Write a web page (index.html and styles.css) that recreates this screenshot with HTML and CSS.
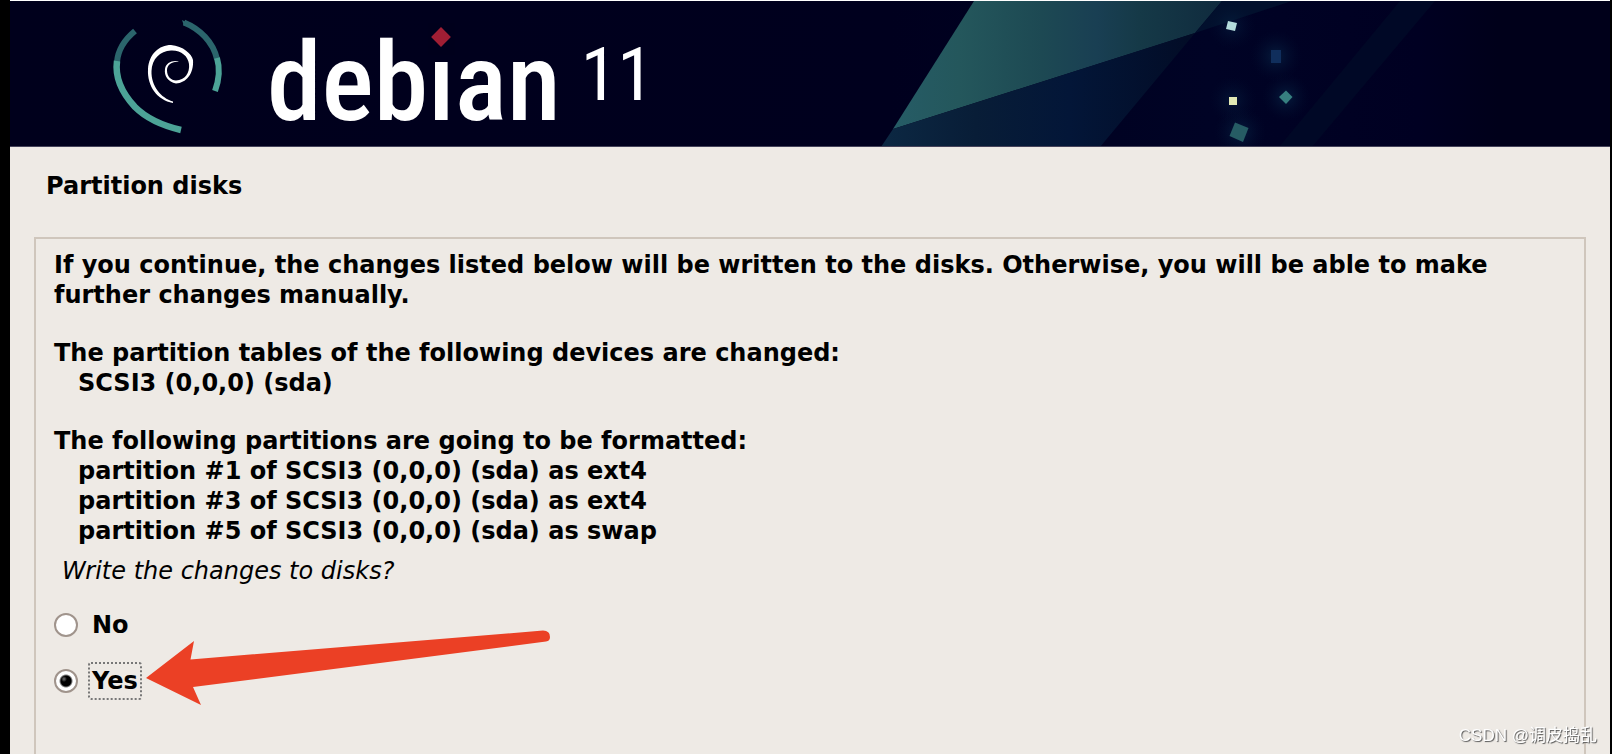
FILE: index.html
```html
<!DOCTYPE html>
<html lang="en">
<head>
  <meta charset="UTF-8">
  <meta name="viewport" content="width=device-width, initial-scale=1">
  <title>Partition disks</title>
  <link rel="stylesheet" href="styles.css">
</head>
<body>
  <div class="installer">
    <header class="banner">
      <svg class="banner-art" viewBox="10 1 1600 145" preserveAspectRatio="xMinYMin slice" aria-hidden="true">
        <defs>
          <linearGradient id="sky" x1="0" x2="1" y1="0" y2="0">
            <stop offset="0" stop-color="#00001c"/>
            <stop offset="0.55" stop-color="#00001e"/>
            <stop offset="0.75" stop-color="#000325"/>
            <stop offset="0.88" stop-color="#000022"/>
            <stop offset="0.93" stop-color="#00001a"/>
          </linearGradient>
          <linearGradient id="beam" gradientUnits="userSpaceOnUse" x1="893" x2="1222" y1="0" y2="0">
            <stop offset="0" stop-color="#265c66"/>
            <stop offset="0.2" stop-color="#24575c"/>
            <stop offset="0.45" stop-color="#1d4953"/>
            <stop offset="0.62" stop-color="#193f53"/>
            <stop offset="0.75" stop-color="#153947"/>
            <stop offset="1" stop-color="#102b3e"/>
          </linearGradient>
          <linearGradient id="shade" gradientUnits="userSpaceOnUse" x1="881" x2="1195" y1="0" y2="0">
            <stop offset="0" stop-color="#0c2843"/>
            <stop offset="0.3" stop-color="#081d37"/>
            <stop offset="0.6" stop-color="#031638"/>
            <stop offset="1" stop-color="#020c26"/>
          </linearGradient>
          <radialGradient id="glow">
            <stop offset="0" stop-color="#0a3050" stop-opacity="0.8"/>
            <stop offset="1" stop-color="#021030" stop-opacity="0"/>
          </radialGradient>
        </defs>
        <rect x="10" y="1" width="1600" height="146" fill="url(#sky)"/>
        <polygon points="974,1 1222,1 1195,33 893,129" fill="url(#beam)"/>
        <polygon points="893,129 881,147 1100,147 1195,33" fill="url(#shade)"/>
        <polygon points="1222,1 1292,1 1195,33" fill="#02102d"/>
        <polygon points="1400,1 1435,1 1312,147 1279,147" fill="#000826"/>
        <!-- sparks -->
        <circle cx="1232" cy="26" r="24" fill="url(#glow)" opacity="0.5"/>
        <circle cx="1276" cy="56" r="26" fill="url(#glow)" opacity="0.7"/>
        <circle cx="1286" cy="97" r="24" fill="url(#glow)" opacity="0.7"/>
        <circle cx="1233" cy="100" r="24" fill="url(#glow)" opacity="0.5"/>
        <circle cx="1240" cy="132" r="26" fill="url(#glow)" opacity="0.7"/>
        <polygon points="1228,21 1237,23 1235,31 1226,29" fill="#b4dcdc"/>
        <rect x="1271" y="50" width="10" height="13" fill="#102e5c"/>
        <polygon points="1286,90.500 1292.500,97 1286,104 1279,97" fill="#378080"/>
        <rect x="1229" y="97" width="8" height="8" fill="#e2e8b4"/>
        <polygon points="1235,122.500 1248.500,128 1243,142 1229.500,136" fill="#265c64"/>
        <!-- swirl -->
        <g fill="none">
          <path d="M135 31 C124 40 118 50 117 62" stroke="#2b656c" stroke-width="6"/>
          <path d="M117 61 C115 76 121 92 135 107 C146 118 164 126 181 130" stroke="#4ca397" stroke-width="6.500"/>
          <path d="M184 22.500 C200 29 213 42 217 59" stroke="#2b656c" stroke-width="6"/>
          <path d="M217 58 C220 68 219 80 215 91" stroke="#4ca397" stroke-width="6"/>
        </g>
        <path d="M182 20 L190 24 L184 26 Z" fill="#2b656c"/>
        <path d="M173 103 C157 100 147 86 148 69 C149 54 159 45 171 45 C183 46 192 54 193 60 C194 74 186 83 176 83.500 C168 82 164 76 165 69 C166 63 172 60 179 61.500 C171 62 167 65 167 70 C167 77 171 80 176 80.500 C185 80 190 73 189 64 C188 56 181 50 171 50.500 C160 51 152 59 151.500 71 C151 86 161 98 173 101.500 Z" fill="#fff"/>
      </svg>
      <div class="brand"><span class="brand-name">deb<span class="brand-i">i</span>an</span><span class="brand-version">11</span></div>
    </header>

    <main class="content">
      <h1 class="title">Partition disks</h1>

      <form class="frame">
        <p>If you continue, the changes listed below will be written to the disks. Otherwise, you will be able to make further changes manually.</p>
        <p>The partition tables of the following devices are changed:<br>
          <span class="device">SCSI3 (0,0,0) (sda)</span></p>
        <p>The following partitions are going to be formatted:<br>
          <span class="device">partition #1 of SCSI3 (0,0,0) (sda) as ext4</span>
          <span class="device">partition #3 of SCSI3 (0,0,0) (sda) as ext4</span>
          <span class="device">partition #5 of SCSI3 (0,0,0) (sda) as swap</span></p>

        <fieldset class="question">
          <legend>Write the changes to disks?</legend>
          <div class="option">
            <input type="radio" name="write" id="write-no" value="no">
            <label for="write-no">No</label>
          </div>
          <div class="option">
            <input type="radio" name="write" id="write-yes" value="yes" checked>
            <label for="write-yes">Yes</label>
            <svg class="arrow" viewBox="146 630 405 76" aria-hidden="true">
              <path d="M146 678 L194 641 L190.500 659.500 L543 630.500 Q550 630.500 550 637 Q550 641 546 641.500 L193 687 L201 705 Z" fill="#eb4025"/>
            </svg>
          </div>
        </fieldset>
      </form>
    </main>
  </div>
  <div class="watermark">CSDN @调皮捣乱</div>
</body>
</html>
```
FILE: styles.css
```css
* {
  box-sizing: border-box;
}
body {
  margin: 0;
  background: #000;
  color: #000;
  font-family: "DejaVu Sans", Verdana, sans-serif;
  font-size: 24px;
  font-weight: bold;
  line-height: 30px;
}
.installer {
  display: flex;
  flex-direction: column;
  min-height: 100vh;
  margin: 0 2px 0 10px;
  background: #eeeae5;
}

/* banner */
.banner {
  position: relative;
  height: 147px;
  border-top: 1px solid #fff;
  border-bottom: 1px solid #45435a;
  background: #00001c;
}
.banner-art {
  position: absolute;
  top: 0;
  left: 0;
  width: 100%;
  height: 100%;
}
.brand {
  position: relative;
  display: flex;
  align-items: flex-start;
  gap: 20px;
  padding: 22px 0 0 257px;
  color: #fff;
  font-family: "Liberation Sans Narrow", "Roboto Condensed", Roboto, sans-serif;
}
.brand-name {
  font-size: 110px;
  font-weight: 500;
  line-height: 120px;
}
.brand-version {
  font-size: 74px;
  font-weight: normal;
  line-height: 104px;
}
.brand-i {
  position: relative;
  display: inline-block;
}
/* the round dot gives way to the red diamond */
.brand-i::before {
  content: "";
  position: absolute;
  top: 0;
  left: 0;
  width: 100%;
  height: 32px;
  background: #00001c;
}
.brand-i::after {
  content: "";
  position: absolute;
  top: 7px;
  left: 50%;
  width: 14px;
  height: 14px;
  margin-left: -7px;
  background: #a01e34;
  transform: rotate(45deg);
}

/* page */
.content {
  display: flex;
  flex: 1;
  flex-direction: column;
  padding: 24px 24px 0;
}
.title {
  margin: 0 0 36px;
  padding-left: 12px;
  font-size: 24px;
}
.frame {
  flex: 1;
  padding: 11px 18px 0;
  border: 2px solid #cfc6bc;
  border-bottom: 0;
}
.frame p {
  margin: 0 0 28px;
}
.device {
  display: block;
  padding-left: 24px;
}
.frame p:has(+ .question) {
  margin-bottom: 10px;
}

/* question */
.question {
  margin: 0;
  padding: 0;
  border: 0;
}
.question legend {
  margin-bottom: 18px;
  padding: 0 8px;
  font-style: italic;
  font-weight: normal;
}
.option {
  position: relative;
  display: flex;
  align-items: center;
  height: 42px;
}
.option + .option {
  margin-top: 14px;
}
.option input {
  width: 24px;
  height: 24px;
  margin: 0 10px 0 0;
  appearance: none;
  border: 2px solid #a0948c;
  border-radius: 50%;
  background: #fff;
}
.option input:checked {
  background:
    radial-gradient(circle at 8px 8px, #777 0, transparent 3px),
    radial-gradient(circle, #000 5px, #fff 7px);
}
.option label {
  padding: 2px;
  border: 2px dotted transparent;
  border-radius: 3px;
}
.option input:checked + label {
  border-color: #777;
}
/* red pointer drawn over the form */
.arrow {
  position: absolute;
  top: -30px;
  left: 92px;
  width: 405px;
  height: 76px;
}

.watermark {
  position: fixed;
  right: 15px;
  bottom: 6px;
  color: #fff;
  font-family: "Liberation Sans", "Noto Sans CJK SC", sans-serif;
  font-size: 17px;
  font-weight: normal;
  line-height: 24px;
  text-shadow: 1px 1px 1px #555;
}
```
